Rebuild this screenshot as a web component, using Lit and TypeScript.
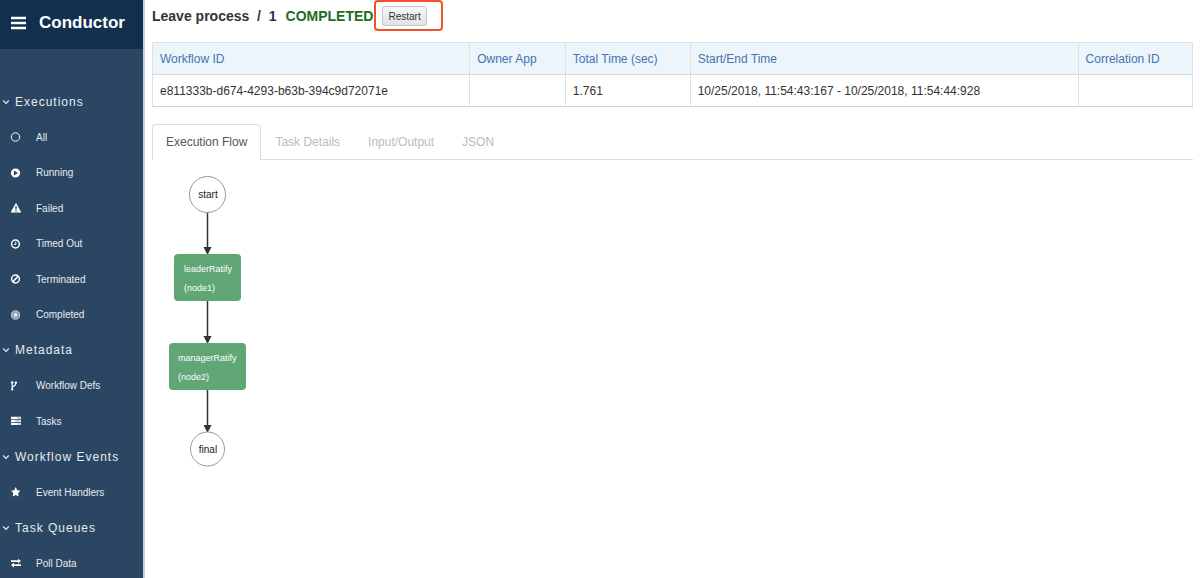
import { LitElement, html, css, svg } from "lit";
import { customElement, state } from "lit/decorators.js";

type Row = { label: string; icon?: string };

const ROWS: Row[] = [
  { label: "Executions" },
  { label: "All", icon: "circle" },
  { label: "Running", icon: "play" },
  { label: "Failed", icon: "warning" },
  { label: "Timed Out", icon: "clock" },
  { label: "Terminated", icon: "ban" },
  { label: "Completed", icon: "bullseye" },
  { label: "Metadata" },
  { label: "Workflow Defs", icon: "fork" },
  { label: "Tasks", icon: "tasks" },
  { label: "Workflow Events" },
  { label: "Event Handlers", icon: "star" },
  { label: "Task Queues" },
  { label: "Poll Data", icon: "exchange" },
];

const ICONS: Record<string, unknown> = {
  circle: svg`<circle cx="6.500" cy="6" r="4.200" fill="none" stroke="currentColor" stroke-width="1"/>`,
  play: svg`<path fill="currentColor" fill-rule="evenodd" d="M6.500 1.400a4.600 4.600 0 1 1 0 9.200a4.600 4.600 0 0 1 0-9.200zM4.900 3.600v4.800L9 6z"/>`,
  warning: svg`<path fill="currentColor" fill-rule="evenodd" d="M7 .8L12 10q.2.600-.5.600H2.300q-.7 0-.5-.6zM6.200 4.200l.2 3.200h1.200l.2-3.200zM6.300 8.200v1.300h1.400V8.200z"/>`,
  clock: svg`<circle cx="6.500" cy="6" r="3.900" fill="none" stroke="currentColor" stroke-width="1.500"/><path d="M6.800 3.700v2.700H5" fill="none" stroke="currentColor" stroke-width="1"/>`,
  ban: svg`<circle cx="6.500" cy="6" r="3.900" fill="none" stroke="currentColor" stroke-width="1.500"/><path d="M3.900 8.600l5.200-5.200" stroke="currentColor" stroke-width="1.500"/>`,
  bullseye: svg`<circle cx="6.500" cy="6" r="4.600" fill="#8f9fb0"/><circle cx="6.500" cy="6" r="4.100" fill="none" stroke="#c3ccd5" stroke-width=".9"/><circle cx="6.500" cy="6" r="1.900" fill="#dde3e9"/>`,
  fork: svg`<path d="M3.200 2.200v7.600M6.800 2.600v1q0 1.500-1.700 2.300q-1.900.9-1.900 2.300" fill="none" stroke="currentColor" stroke-width="1.200"/><circle cx="3.200" cy="2.400" r="1.200" fill="currentColor"/><circle cx="6.800" cy="2.600" r="1.200" fill="currentColor"/><circle cx="3.200" cy="9.600" r="1.100" fill="currentColor"/>`,
  tasks: svg`<path fill="currentColor" d="M2 1.700h10v2.400H2zM2 4.700h10v2.400H2zM2 7.700h10v2.400H2z"/><path fill="#2b4663" opacity=".55" d="M8 2.400h3.300v1H8zM6 5.400h5.300v1H6zM9 8.400h2.300v1H9z"/>`,
  star: svg`<path fill="currentColor" d="M6.700 1.100l1.500 3.100 3.300.5-2.400 2.400.5 3.400-2.900-1.600-3 1.600.600-3.400-2.400-2.400 3.300-.5z"/>`,
  exchange: svg`<path fill="currentColor" d="M2 3.200h7V1.700l3 2.400-3 2.400V4.900H2zM12 7.200H5V5.700L2 8.100l3 2.400V8.900h7z"/>`,
};

const COLUMNS = [
  { title: "Workflow ID", value: "e811333b-d674-4293-b63b-394c9d72071e", cls: "c-id" },
  { title: "Owner App", value: "", cls: "c-owner" },
  { title: "Total Time (sec)", value: "1.761", cls: "c-total" },
  { title: "Start/End Time", value: "10/25/2018, 11:54:43:167 - 10/25/2018, 11:54:44:928", cls: "c-time" },
  { title: "Correlation ID", value: "", cls: "c-corr" },
];

const TABS = ["Execution Flow", "Task Details", "Input/Output", "JSON"];

@customElement("side-nav")
class SideNav extends LitElement {
  static styles = css`
    :host {
      display: block;
      background: #2b4663;
      color: #e6ebf0;
    }
    .brand {
      display: flex;
      align-items: center;
      gap: 13px;
      height: 49px;
      padding: 0 10px 3px;
      box-sizing: border-box;
      background: #12304e;
      color: #fff;
      font-size: 17px;
      font-weight: bold;
    }
    .menu {
      display: flex;
      padding: 0;
      border: 0;
      background: none;
      color: inherit;
    }
    .rows {
      list-style: none;
      margin: 0;
      padding: 35px 0 0;
    }
    .row {
      display: flex;
      align-items: center;
      height: 35px;
      white-space: nowrap;
    }
    .row:nth-child(even) {
      height: 36px;
    }
    .head {
      display: flex;
      align-items: center;
      gap: 5px;
      padding: 0 0 0 2px;
      border: 0;
      background: none;
      color: inherit;
      font: inherit;
      font-size: 12px;
      letter-spacing: 1px;
    }
    .link {
      display: flex;
      align-items: center;
      gap: 14px;
      padding-left: 9px;
      color: inherit;
      font-size: 10px;
      text-decoration: none;
    }
    .link svg {
      color: #fff;
    }
  `;

  render() {
    return html`
      <div class="brand">
        <button class="menu" aria-label="Toggle menu">
          <svg width="16" height="14" viewBox="0 0 16 14" aria-hidden="true">
            <path d="M1 2h15M1 7h15M1 12h15" stroke="currentColor" stroke-width="2.400" />
          </svg>
        </button>
        <span>Conductor</span>
      </div>
      <nav>
        <ul class="rows">
          ${ROWS.map(
            (r) => html`<li class="row">
              ${r.icon
                ? html`<a class="link" href="#">
                    <svg width="13" height="12" viewBox="0 0 13 12" aria-hidden="true">${ICONS[r.icon]}</svg>${r.label}</a>`
                : html`<button class="head">
                    <svg width="8" height="8" viewBox="0 0 8 8" aria-hidden="true">
                      <path d="M1.200 2.500L4 5.300l2.800-2.800" fill="none" stroke="currentColor" stroke-width="1.200" /></svg>${r.label}
                  </button>`}
            </li>`
          )}
        </ul>
      </nav>
    `;
  }
}

@customElement("flow-graph")
class FlowGraph extends LitElement {
  static styles = css`
    :host {
      display: block;
      padding: 16px 0 0 16px;
    }
    svg {
      display: block;
    }
    .ring {
      fill: #fff;
      stroke: #999;
    }
    .edge {
      stroke: #333;
      stroke-width: 1.5;
    }
    .arrow {
      fill: #333;
    }
    .task {
      fill: #61a675;
    }
    .end {
      fill: #222;
      font-size: 10px;
      text-anchor: middle;
    }
    .name {
      fill: #fff;
      font-size: 9px;
    }
  `;

  render() {
    return html`
      <svg width="80" height="292" viewBox="0 0 80 292">
        <path class="edge" d="M39.500 36.500V73M39.500 125V162M39.500 214V251" />
        <path class="arrow" d="M35.500 71h8l-4 8zM35.500 160h8l-4 8zM35.500 249h8l-4 8z" />
        <circle class="ring" cx="39.500" cy="18.500" r="18" />
        <text class="end" x="40" y="22">start</text>
        <rect class="task" x="6" y="78" width="67" height="47" rx="4" />
        <text class="name" x="16" y="96">leaderRatify</text>
        <text class="name" x="16" y="115">(node1)</text>
        <rect class="task" x="1" y="167" width="77" height="47" rx="4" />
        <text class="name" x="10" y="185">managerRatify</text>
        <text class="name" x="10" y="204">(node2)</text>
        <circle class="ring" cx="39.500" cy="273" r="17" />
        <text class="end" x="40" y="277">final</text>
      </svg>
    `;
  }
}

@customElement("app-root")
class AppRoot extends LitElement {
  @state() private tab = 0;

  static styles = css`
    :host {
      display: grid;
      grid-template-columns: 143px minmax(0, 1fr);
      height: 100vh;
      overflow: hidden;
      background: #fff;
      color: #333;
      font-family: "Liberation Sans", Arial, Helvetica, sans-serif;
      font-size: 12px;
    }
    .main {
      padding: 0 7px;
      border-left: 2px solid #c5d0da;
    }
    .title {
      display: flex;
      align-items: center;
      margin: 0 0 11px;
      font-size: 14px;
      white-space: pre;
    }
    .status {
      margin-left: 9px;
      color: #25691f;
    }
    .mark {
      margin-left: 1px;
      padding: 4px 14px 3px 6px;
      border: 2px solid #f4502a;
      border-radius: 4px;
    }
    .restart {
      display: block;
      height: 20px;
      padding: 0 5px;
      border: 1px solid #c8c8c8;
      border-radius: 2px;
      background: linear-gradient(#f8f8f8, #e2e2e2);
      color: #333;
      font-family: inherit;
      font-size: 10px;
    }
    .info {
      width: 100%;
      border-collapse: collapse;
      border: 1px solid #e0e0e0;
      border-bottom-color: #ccc;
      text-align: left;
    }
    .info th,
    .info td {
      height: 31px;
      padding: 0 7px;
      border-left: 1px solid #e0e0e0;
      white-space: nowrap;
    }
    .info th {
      border-bottom: 1px solid #d5dbdf;
      background: #ebf5fa;
      color: #4773b5;
      font-weight: normal;
    }
    .c-id {
      width: 30.5%;
    }
    .c-owner {
      width: 9.2%;
    }
    .c-total {
      width: 12%;
    }
    .c-time {
      width: 37.3%;
    }
    .c-corr {
      width: 11%;
    }
    .tabs {
      display: flex;
      margin-top: 17px;
      border-bottom: 1px solid #ddd;
    }
    .tab {
      height: 36px;
      margin: 0 0 -1px;
      padding: 0 13px 1px;
      box-sizing: border-box;
      border: 1px solid transparent;
      border-bottom: 0;
      border-radius: 4px 4px 0 0;
      background: none;
      color: #bbb;
      font: inherit;
    }
    .tab[aria-selected="true"] {
      border-color: #ddd;
      background: #fff;
      color: #555;
    }
  `;

  render() {
    return html`
      <side-nav></side-nav>
      <main class="main">
        <h1 class="title"><span>Leave process  /  1</span><span class="status">COMPLETED</span><span class="mark"><button class="restart">Restart</button></span></h1>
        <table class="info">
          <thead>
            <tr>${COLUMNS.map((c) => html`<th class=${c.cls} scope="col">${c.title}</th>`)}</tr>
          </thead>
          <tbody>
            <tr>${COLUMNS.map((c) => html`<td>${c.value}</td>`)}</tr>
          </tbody>
        </table>
        <div class="tabs" role="tablist">
          ${TABS.map(
            (t, i) => html`<button class="tab" role="tab" aria-selected=${i === this.tab ? "true" : "false"} @click=${() => (this.tab = i)}>${t}</button>`
          )}
        </div>
        <flow-graph></flow-graph>
      </main>
    `;
  }
}
